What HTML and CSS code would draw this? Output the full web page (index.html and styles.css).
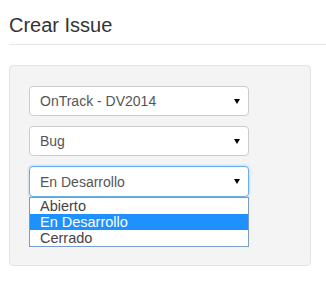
FILE: index.html
```html
<!DOCTYPE html>
<html lang="es">
<head>
    <meta charset="UTF-8">
    <meta name="viewport" content="width=device-width, initial-scale=1.0">
    <title>Crear Issue</title>
    <link rel="stylesheet" href="styles.css">
</head>
<body>
    <div class="page">
        <h1>Crear Issue</h1>
        <div class="well">
            <div class="select">
                <span>OnTrack - DV2014</span>
                <svg class="caret" width="6" height="5" viewBox="0 0 6 5"><polygon points="0,0 6,0 3,5" fill="#000"/></svg>
            </div>
            <div class="select">
                <span>Bug</span>
                <svg class="caret" width="6" height="5" viewBox="0 0 6 5"><polygon points="0,0 6,0 3,5" fill="#000"/></svg>
            </div>
            <div class="dropdown">
                <div class="select focus">
                    <span>En Desarrollo</span>
                    <svg class="caret" width="6" height="5" viewBox="0 0 6 5"><polygon points="0,0 6,0 3,5" fill="#000"/></svg>
                </div>
                <ul class="options">
                    <li>Abierto</li>
                    <li class="selected">En Desarrollo</li>
                    <li>Cerrado</li>
                </ul>
            </div>
        </div>
    </div>
</body>
</html>
```

FILE: styles.css
```css
body{
    margin:0;
    padding:0;
    background:#fff;
    font-family: "Liberation Sans", Arial, sans-serif;
    color:#333;
}
.page{
    padding-left:9px;
}
h1{
    margin:0;
    padding-top:14px;
    font-size:20px;
    font-weight:normal;
    line-height:22px;
    height:30px;
    border-bottom:1px solid #e6e6e6;
}
.well{
    margin-top:20px;
    width:262px;
    padding:20px 19px 18px 19px;
    background:#f4f4f4;
    border:1px solid #e3e3e3;
    border-radius:4px;
    display:flex;
    flex-direction:column;
    gap:10px;
}
.select{
    width:218px;
    height:28px;
    box-sizing:content-box;
    border:1px solid #ccc;
    border-radius:4px;
    background:#fff;
    display:flex;
    align-items:center;
    justify-content:space-between;
    font-size:14px;
    color:#555;
}
.select span{
    padding-left:10px;
}
.caret{
    margin-right:8px;
}
.select.focus{
    height:29px;
    border-color:#66afe9;
    box-shadow:0 0 3px rgba(102,175,233,0.6);
}
.options{
    list-style:none;
    margin:0;
    padding:0;
    width:218px;
    border:1px solid #7a9cc6;
    background:#fff;
    font-size:14.5px;
    color:#444;
}
.options li{
    height:16px;
    line-height:16px;
    padding-left:10px;
}
.options li.selected{
    background:#1e90ff;
    color:#fff;
}
```
